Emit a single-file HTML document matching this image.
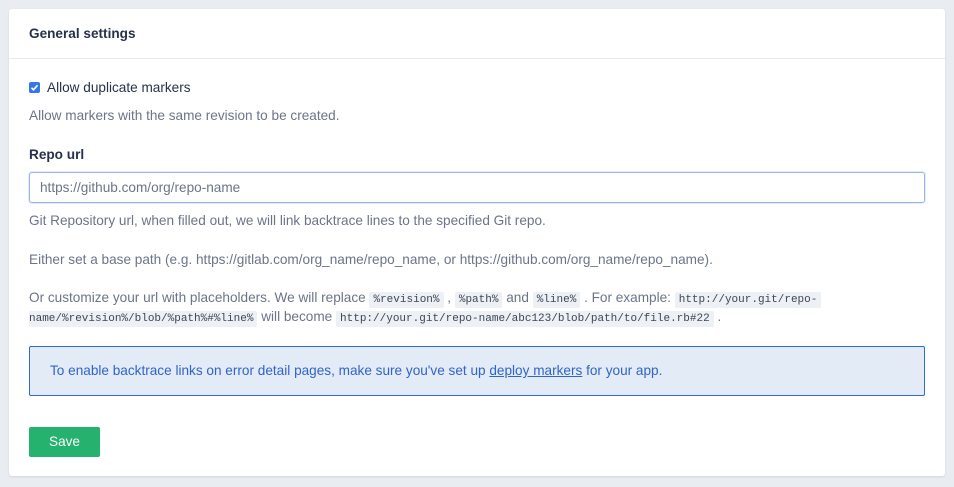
<!DOCTYPE html>
<html><head><style>
body{margin:0;background:#e9ecf1;width:954px;height:487px;position:relative;font-family:"Liberation Sans",sans-serif;font-size:13.6px;color:#6b7489;overflow:hidden}
.card{position:absolute;left:9px;top:9px;width:936px;height:467px;background:#fff;border-radius:3px;box-shadow:0 1px 2px rgba(0,0,0,.1)}
.a{position:absolute;white-space:nowrap}
.hdr{left:0;top:0;width:936px;height:49px;border-bottom:1px solid #e6e9ee}
code{font-family:"Liberation Mono",monospace;font-size:11px;background:#edf0f4;color:#3d4657;padding:2px 4px;border-radius:2px}
</style></head><body>
<div class="card">
<div class="a hdr"></div>
<div class="a" style="left:20px;top:17px;font-weight:bold;color:#27324a">General settings</div>
<div class="a" style="left:20px;top:73px;width:11px;height:11px;background:#3477e6;border-radius:2px"><svg width="11" height="11" style="position:absolute;left:0;top:0"><path d="M2.5 5.8l2 2 4-4.5" stroke="#fff" stroke-width="1.6" fill="none"/></svg></div>
<div class="a" style="left:38px;top:71px;color:#27324a">Allow duplicate markers</div>
<div class="a" style="left:20px;top:99px">Allow markers with the same revision to be created.</div>
<div class="a" style="left:20px;top:138px;font-weight:bold;color:#27324a">Repo url</div>
<div class="a" style="left:20px;top:163px;width:894px;height:29px;border:1px solid #97b5ea;border-radius:3px;box-shadow:0 0 0 1px #e3ecfb"></div>
<div class="a" style="left:31px;top:171px;color:#6b7489">https://github.com/org/repo-name</div>
<div class="a" style="left:20px;top:204px">Git Repository url, when filled out, we will link backtrace lines to the specified Git repo.</div>
<div class="a" style="left:20px;top:243px">Either set a base path (e.g. https://gitlab.com/org_name/repo_name, or https://github.com/org_name/repo_name).</div>
<div class="a" style="left:20px;top:281px">Or customize your url with placeholders. We will replace <code>%revision%</code> , <code>%path%</code> and <code>%line%</code> . For example: <code>http://your.git/repo-</code></div>
<div class="a" style="left:20px;top:300px"><code style="padding-left:0">name/%revision%/blob/%path%#%line%</code> will become <code>http://your.git/repo-name/abc123/blob/path/to/file.rb#22</code> .</div>
<div class="a" style="left:20px;top:337px;width:894px;height:48px;background:#e2ebf6;border:1px solid #2f6bd6;border-radius:2px"></div>
<div class="a" style="left:41px;top:354px;color:#2f65c8">To enable backtrace links on error detail pages, make sure you've set up <u>deploy markers</u> for your app.</div>
<div class="a" style="left:20px;top:418px;width:71px;height:30px;background:#25b26f;border-radius:2px;color:#fff;text-align:center;line-height:30px">Save</div>
</div>
</body></html>
